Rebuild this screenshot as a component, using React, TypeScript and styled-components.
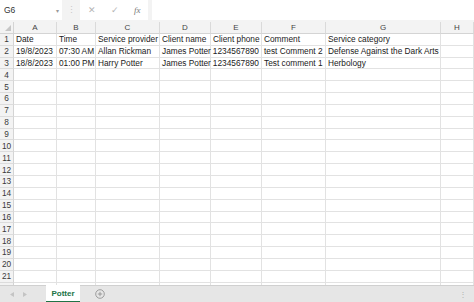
import React from "react";
import styled, { createGlobalStyle } from "styled-components";

const GlobalStyle = createGlobalStyle`
  html, body, #root {
    margin: 0;
    padding: 0;
    width: 100%;
    height: 100%;
    overflow: hidden;
  }
  body {
    font-family: "Liberation Sans", Arial, sans-serif;
    background: #fff;
  }
`;

const Window = styled.div`
  display: flex;
  flex-direction: column;
  width: 474px;
  height: 302px;
  background: #f3f3f3;
`;

const FormulaBar = styled.div`
  display: flex;
  align-items: stretch;
  height: 20px;
  padding-bottom: 2px;
  background: #f3f3f3;
`;

const NameBox = styled.div`
  display: flex;
  align-items: center;
  justify-content: space-between;
  width: 62px;
  padding: 0 3px 0 4px;
  box-sizing: border-box;
  background: #fff;
  font-size: 8.5px;
  color: #333;
`;

const Caret = styled.span`
  font-size: 6px;
  color: #999;
`;

const Grip = styled.div`
  display: flex;
  align-items: center;
  justify-content: center;
  width: 18px;
  color: #c8c8c8;
  font-size: 9px;
`;

const FxBox = styled.div`
  display: flex;
  align-items: center;
  justify-content: space-around;
  width: 68px;
  background: #fff;
  color: #b5b5b5;
  font-size: 9px;
`;

const Fx = styled.span`
  font-family: "Liberation Serif", serif;
  font-style: italic;
  color: #777;
  font-size: 9px;
`;

const Input = styled.div`
  flex: 1;
  margin-left: 4px;
  background: #fff;
`;

const Sheet = styled.div`
  flex: 1;
  overflow: hidden;
  background: #fff;
`;

const Grid = styled.div`
  display: grid;
  grid-template-columns: 14px 43px 39px 64px 51px 51px 64px 115px 1fr;
  grid-auto-rows: 11.85px;
`;

const Corner = styled.div`
  background: #f3f3f3;
  border-right: 1px solid #d4d4d4;
  border-bottom: 1px solid #d4d4d4;
  position: relative;
  &::after {
    content: "";
    position: absolute;
    right: 2px;
    bottom: 2px;
    border-left: 6px solid transparent;
    border-bottom: 6px solid #c6c6c6;
  }
`;

const ColHead = styled.div`
  display: flex;
  align-items: center;
  justify-content: center;
  background: #f3f3f3;
  border-right: 1px solid #dadada;
  border-bottom: 1px solid #d4d4d4;
  font-size: 8px;
  color: #444;
`;

const RowHead = styled.div`
  display: flex;
  align-items: center;
  justify-content: center;
  background: #f3f3f3;
  border-right: 1px solid #d4d4d4;
  border-bottom: 1px solid #dcdcdc;
  font-size: 8.3px;
  color: #3a3a3a;
`;

const Cell = styled.div<{ $right?: boolean }>`
  display: flex;
  align-items: center;
  justify-content: ${(p) => (p.$right ? "flex-end" : "flex-start")};
  padding: 0 2px;
  border-right: 1px solid #e2e2e2;
  border-bottom: 1px solid #e2e2e2;
  font-size: 8.3px;
  color: #1a1a1a;
  white-space: nowrap;
  overflow: visible;
`;

const TabBar = styled.div`
  display: flex;
  align-items: stretch;
  height: 16px;
  background: #e6e6e6;
  border-top: 1px solid #d0d0d0;
`;

const NavArrows = styled.div`
  display: flex;
  align-items: center;
  gap: 9px;
  width: 46px;
  padding-left: 10px;
  box-sizing: border-box;
`;

const Tab = styled.div`
  display: flex;
  align-items: center;
  justify-content: center;
  width: 34px;
  margin-top: -1px;
  background: #fff;
  border-bottom: 1px solid #217346;
  color: #217346;
  font-weight: bold;
  font-size: 8px;
`;

const AddSheet = styled.div`
  display: flex;
  align-items: center;
  margin-left: 15px;
`;

const Spacer = styled.div`
  flex: 1;
`;

const Resize = styled.div`
  display: flex;
  align-items: center;
  padding-right: 7px;
  color: #b0b0b0;
  font-size: 8px;
`;

const columns = ["A", "B", "C", "D", "E", "F", "G", "H"];

const data: { v: string; right?: boolean }[][] = [
  [
    { v: "Date" },
    { v: "Time" },
    { v: "Service provider" },
    { v: "Client name" },
    { v: "Client phone" },
    { v: "Comment" },
    { v: "Service category" },
    { v: "" },
  ],
  [
    { v: "19/8/2023" },
    { v: "07:30 AM" },
    { v: "Allan Rickman" },
    { v: "James Potter" },
    { v: "1234567890", right: true },
    { v: "test Comment 2" },
    { v: "Defense Against the Dark Arts" },
    { v: "" },
  ],
  [
    { v: "18/8/2023" },
    { v: "01:00 PM" },
    { v: "Harry Potter" },
    { v: "James Potter" },
    { v: "1234567890", right: true },
    { v: "Test comment 1" },
    { v: "Herbology" },
    { v: "" },
  ],
];

const rowCount = 22;

export default function App() {
  return (
    <>
      <GlobalStyle />
      <Window>
        <FormulaBar>
          <NameBox>
            <span>G6</span>
            <Caret>▾</Caret>
          </NameBox>
          <Grip>⋮</Grip>
          <FxBox>
            <span>✕</span>
            <span>✓</span>
            <Fx>fx</Fx>
          </FxBox>
          <Input />
        </FormulaBar>
        <Sheet>
          <Grid>
            <Corner />
            {columns.map((c) => (
              <ColHead key={c}>{c}</ColHead>
            ))}
            {Array.from({ length: rowCount }, (_, r) => (
              <React.Fragment key={r}>
                <RowHead>{r + 1}</RowHead>
                {columns.map((c, ci) => {
                  const cell = data[r]?.[ci];
                  return (
                    <Cell key={c} $right={cell?.right}>
                      {cell?.v}
                    </Cell>
                  );
                })}
              </React.Fragment>
            ))}
          </Grid>
        </Sheet>
        <TabBar>
          <NavArrows>
            <svg width="4" height="5" viewBox="0 0 4 5">
              <path d="M4 0L0 2.5L4 5Z" fill="#c4c4c4" />
            </svg>
            <svg width="4" height="5" viewBox="0 0 4 5">
              <path d="M0 0L4 2.5L0 5Z" fill="#c4c4c4" />
            </svg>
          </NavArrows>
          <Tab>Potter</Tab>
          <AddSheet>
            <svg width="10" height="10" viewBox="0 0 10 10">
              <circle cx="5" cy="5" r="4.3" fill="none" stroke="#8a8a8a" strokeWidth="0.8" />
              <path d="M5 2.8v4.4M2.8 5h4.4" stroke="#8a8a8a" strokeWidth="0.8" />
            </svg>
          </AddSheet>
          <Spacer />
          <Resize>⋮</Resize>
        </TabBar>
      </Window>
    </>
  );
}
